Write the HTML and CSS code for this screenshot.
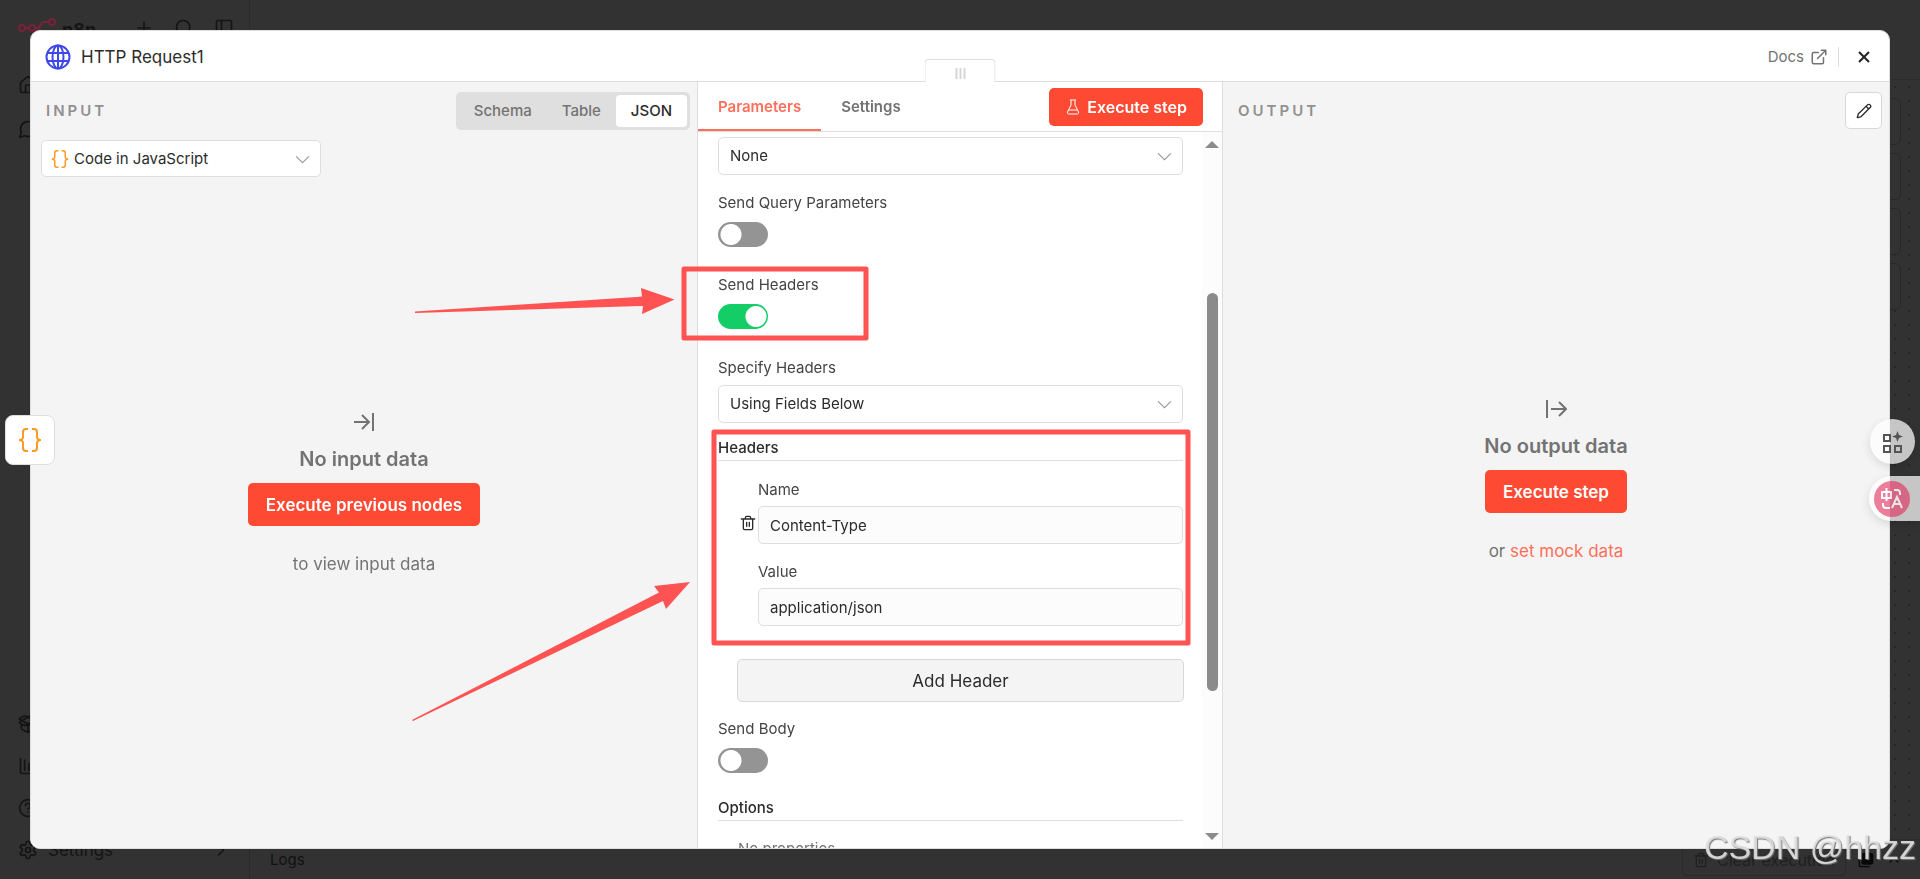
FILE: index.html
```html
<!DOCTYPE html>
<html lang="en">
<head>
<meta charset="utf-8">
<title>HTTP Request1 - n8n</title>
<link rel="stylesheet" href="styles.css">
</head>
<body>
<div class="app">
  <aside class="sidebar">
    <div class="brand">
      <svg class="logo" viewBox="0 0 40 22" width="40" height="22" fill="none" stroke="currentColor" stroke-width="2"><circle cx="4" cy="11" r="3"/><circle cx="14" cy="11" r="3"/><circle cx="34" cy="5" r="3"/><circle cx="32" cy="17" r="3"/><path d="M7 11h4M17 11h2c4 0 3-6 7-6h5M19 11c4 0 4 6 8 6h2"/></svg>
      <span class="brand-name">n8n</span>
      <svg class="icon push" viewBox="0 0 24 24"><path d="M5 12h14M12 5v14"/></svg>
      <svg class="icon" viewBox="0 0 24 24"><circle cx="11" cy="11" r="8"/><path d="m21 21-4.300-4.300"/></svg>
      <svg class="icon" viewBox="0 0 24 24"><rect x="3" y="3" width="18" height="18" rx="2"/><path d="M9 3v18"/></svg>
    </div>
    <nav class="side-nav">
      <svg class="icon" viewBox="0 0 24 24"><path d="M15 21v-8a1 1 0 0 0-1-1h-4a1 1 0 0 0-1 1v8"/><path d="M3 10a2 2 0 0 1 .7-1.500l7-6a2 2 0 0 1 2.600 0l7 6A2 2 0 0 1 21 10v9a2 2 0 0 1-2 2H5a2 2 0 0 1-2-2z"/></svg>
      <svg class="icon" viewBox="0 0 24 24"><path d="M7.900 20A9 9 0 1 0 4 16.100L2 22Z"/></svg>
    </nav>
    <nav class="side-nav bottom">
      <svg class="icon" viewBox="0 0 24 24"><path d="M12 22v-9M15 2.200a1.700 1.700 0 0 1 1.500 0L21.700 5a1 1 0 0 1 0 1.700L9 13.600a1.700 1.700 0 0 1-1.600 0L2.300 11a1 1 0 0 1 0-1.700zM20 13v3.900a2 2 0 0 1-1 1.700L13 21.700a2 2 0 0 1-2 0l-6-3.100a2 2 0 0 1-1-1.700V13M21.700 11a1 1 0 0 0 0-1.700L9 2.400a2 2 0 0 0-1.500 0L2.300 5a1 1 0 0 0 0 1.700l12.700 7a1.700 1.700 0 0 0 1.600 0z"/></svg>
      <svg class="icon" viewBox="0 0 24 24"><path d="M3 3v16a2 2 0 0 0 2 2h16M8 5v12M13 9v8M18 7v10"/></svg>
      <svg class="icon" viewBox="0 0 24 24"><circle cx="12" cy="12" r="10"/><path d="M9 9a3 3 0 0 1 6 1c0 2-3 3-3 3M12 17h.01"/></svg>
      <div class="side-row">
        <svg class="icon" viewBox="0 0 24 24"><circle cx="12" cy="12" r="3"/><path d="M9.700 4a2.300 2.300 0 0 1 4.600 0 2.300 2.300 0 0 0 3.300 2 2.300 2.300 0 0 1 2.300 4 2.300 2.300 0 0 0 0 4 2.300 2.300 0 0 1-2.300 4 2.300 2.300 0 0 0-3.300 2 2.300 2.300 0 0 1-4.600 0 2.300 2.300 0 0 0-3.300-2 2.300 2.300 0 0 1-2.300-4 2.300 2.300 0 0 0 0-4 2.300 2.300 0 0 1 2.300-4 2.300 2.300 0 0 0 3.300-2"/></svg>
        <span>Settings</span>
        <svg class="icon push" viewBox="0 0 24 24"><path d="m9 18 6-6-6-6"/></svg>
      </div>
    </nav>
  </aside>
  <main class="workspace">
    <div class="topbar"></div>
    <div class="canvas">
      <span class="ghost"></span><span class="ghost"></span><span class="ghost"></span><span class="ghost"></span>
    </div>
    <footer class="logs">
      <span>Logs</span>
      <span class="clear push"><svg class="icon" viewBox="0 0 24 24"><path d="M3 6h18M19 6v14a2 2 0 0 1-2 2H7a2 2 0 0 1-2-2V6M8 6V4a2 2 0 0 1 2-2h4a2 2 0 0 1 2 2v2M10 11v6M14 11v6"/></svg>Clear execution</span>
      <svg class="icon dark" viewBox="0 0 24 24"><rect x="6" y="2" width="16" height="16" rx="3" fill="currentColor"/><path d="M2 7v12a3 3 0 0 0 3 3h12"/></svg>
      <svg class="icon dark" viewBox="0 0 24 24"><path d="m6 15 6-6 6 6"/></svg>
    </footer>
  </main>
</div>

<section class="modal" role="dialog" aria-label="HTTP Request1">
  <header class="modal-head">
    <svg class="globe" viewBox="0 0 26 26" width="26" height="26" fill="none" stroke="currentColor" stroke-width="2"><circle cx="13" cy="13" r="11.500"/><ellipse cx="13" cy="13" rx="5.500" ry="11.500"/><path d="M13 1.500v23M2.500 9h21M2.500 17h21"/></svg>
    <h1>HTTP Request1</h1>
    <a class="docs" href="#">Docs
      <svg class="icon" viewBox="0 0 24 24"><path d="M15 3h6v6M10 14 21 3M18 13v6a2 2 0 0 1-2 2H5a2 2 0 0 1-2-2V8a2 2 0 0 1 2-2h6"/></svg>
    </a>
    <button class="close" aria-label="Close"><svg viewBox="0 0 12 12" width="12" height="12" fill="none" stroke="currentColor" stroke-width="2"><path d="m1 1 10 10M11 1 1 11"/></svg></button>
    <span class="grip"><i></i><i></i><i></i></span>
  </header>
  <div class="panels">
    <section class="side input">
      <div class="side-head">
        <h2>INPUT</h2>
        <div class="segmented"><button>Schema</button><button>Table</button><button class="on">JSON</button></div>
      </div>
      <div class="picker">
        <svg class="braces" viewBox="0 0 24 24"><path d="M10 1H8a3 3 0 0 0-3 3v5c0 2-2 3-4 3 2 0 4 1 4 3v5a3 3 0 0 0 3 3h2M14 1h2a3 3 0 0 1 3 3v5c0 2 2 3 4 3-2 0-4 1-4 3v5a3 3 0 0 1-3 3h-2"/></svg>
        <select aria-label="Input node"><option>Code in JavaScript</option></select>
        <svg class="chev" viewBox="0 0 14 8"><path d="m1 1 6 6 6-6"/></svg>
      </div>
      <div class="empty">
        <svg class="arrow" viewBox="0 0 22 18"><path d="M1 9h15M9 2l7 7-7 7M20 0v18"/></svg>
        <h3>No input data</h3>
        <button class="primary large">Execute previous nodes</button>
        <p>to view input data</p>
      </div>
    </section>

    <section class="center">
      <div class="tabs">
        <button class="tab on">Parameters</button>
        <button class="tab">Settings</button>
        <button class="primary run push"><svg class="flask" viewBox="0 0 14 16"><path d="M4 1h6M5 1v5L1.500 13a1.500 1.500 0 0 0 1 2h9a1.500 1.500 0 0 0 1-2L9 6V1M3 11h8"/></svg>Execute step</button>
      </div>
      <div class="scroll">
        <form class="fields">
          <div class="box"><select aria-label="Authentication"><option>None</option></select><svg class="chev" viewBox="0 0 14 8"><path d="m1 1 6 6 6-6"/></svg></div>
          <div class="row"><label for="q">Send Query Parameters</label><input class="switch" type="checkbox" id="q"></div>
          <div class="row"><label for="h">Send Headers</label><input class="switch" type="checkbox" id="h" checked></div>
          <div class="row specify"><label for="s">Specify Headers</label>
            <div class="box"><select id="s"><option>Using Fields Below</option></select><svg class="chev" viewBox="0 0 14 8"><path d="m1 1 6 6 6-6"/></svg></div></div>
          <fieldset>
            <div class="legend">Headers</div>
            <div class="pair">
              <button type="button" class="trash" aria-label="Delete header"><svg class="icon" viewBox="0 0 24 24"><path d="M2 6h20M19 6v14a2 2 0 0 1-2 2H7a2 2 0 0 1-2-2V6M8 6V4a2 2 0 0 1 2-2h4a2 2 0 0 1 2 2v2M10 11v6M14 11v6"/></svg></button>
              <div class="inputs">
                <label for="n">Name</label><input class="box text" id="n" value="Content-Type">
                <label for="v">Value</label><input class="box text" id="v" value="application/json">
              </div>
            </div>
            <button type="button" class="add">Add Header</button>
          </fieldset>
          <div class="row body"><label for="b">Send Body</label><input class="switch" type="checkbox" id="b"></div>
          <div class="legend options">Options</div>
          <p class="none">No properties</p>
        </form>
        <div class="bar"><i class="up"></i><i class="thumb"></i><i class="down"></i></div>
      </div>
    </section>

    <section class="side output">
      <div class="side-head">
        <h2>OUTPUT</h2>
        <button class="edit" aria-label="Edit output"><svg class="icon" viewBox="0 0 24 24"><path d="M21.200 6.800a1 1 0 0 0-4-4L3.800 16.200a2 2 0 0 0-.5.800L2 21.400a.5.500 0 0 0 .6.600L7 20.700a2 2 0 0 0 .8-.5zM15 5l4 4"/></svg></button>
      </div>
      <div class="empty">
        <svg class="arrow" viewBox="0 0 22 18"><path d="M2 0v18M6 9h15M14 2l7 7-7 7"/></svg>
        <h3>No output data</h3>
        <button class="primary large">Execute step</button>
        <p>or <a href="#">set mock data</a></p>
      </div>
    </section>
  </div>
</section>

<button class="node-badge" aria-label="Code in JavaScript"><svg class="braces" viewBox="0 0 24 24"><path d="M10 1H8a3 3 0 0 0-3 3v5c0 2-2 3-4 3 2 0 4 1 4 3v5a3 3 0 0 0 3 3h2M14 1h2a3 3 0 0 1 3 3v5c0 2 2 3 4 3-2 0-4 1-4 3v5a3 3 0 0 1-3 3h-2"/></svg></button>
<button class="float apps" aria-label="Apps"><svg viewBox="1 0 22 22" width="22" height="22" fill="none" stroke="currentColor" stroke-width="2"><path d="M3 4h6v6H3zM3 15h6v6H3zM14 15h6v6h-6z"/><path d="M16.500 0 18 4l4 1.500L18 7l-1.500 4L15 7l-4-1.500L15 4z" fill="currentColor" stroke="none"/></svg></button>
<button class="float translate" aria-label="Translate"><svg viewBox="0 0 36 36" width="36" height="36" fill="none" stroke="#fff" stroke-width="2"><circle cx="18" cy="18" r="18" fill="#e02a5c" stroke="none"/><path d="M8 11h9v6H8zM12.500 7v13M20 9h3a3 3 0 0 1 3 3v2M9 22v2a3 3 0 0 0 3 3h4M18 27l5-11 5 11M20 23h6"/></svg></button>

<svg class="marks" width="1920" height="879" viewBox="0 0 1920 879" aria-hidden="true">
  <g fill="none" stroke="#ff5252" stroke-width="5" stroke-linejoin="round"><rect x="684" y="269" width="182" height="69"/><rect x="714" y="432" width="474" height="211"/></g>
  <g fill="#ff5252"><path d="M415 311.500 642 296.500 641 288 674.500 299.500 642 314 643 306 415 313z"/><path d="M412 720 659 592.500 654 586 690 582 666 609 663 601 413 721z"/></g>
</svg>
<div class="watermark">CSDN @hhzz</div>
</body>
</html>
```
FILE: styles.css
```css
* { box-sizing: border-box; }
body { margin: 0; height: 100vh; overflow: hidden; background: #323232; color: #2b2b2b; font: 15px/20px Inter, sans-serif; }
h1, h2, h3, p, fieldset { margin: 0; padding: 0; border: 0; font-weight: 400; min-width: 0; }
button, input, select { font: inherit; color: inherit; margin: 0; }
button { border: 0; background: none; padding: 0; cursor: pointer; }
a { text-decoration: none; color: inherit; }
.push { margin-left: auto; }
.icon { width: 20px; height: 20px; flex: none; fill: none; stroke: currentColor; stroke-width: 2; stroke-linecap: round; stroke-linejoin: round; }

.app { display: flex; height: 100vh; color: #141414; }
.sidebar { width: 250px; border-right: 1px solid #2a2a2a; display: flex; flex-direction: column; }
.brand { display: flex; align-items: center; gap: 20px; height: 22px; margin-top: 17px; padding: 0 15px 0 18px; }
.logo { color: #7a2038; }
.brand-name { padding-top: 3px; font-size: 18px; font-weight: 700; margin-left: -16px; }
.side-nav { display: flex; flex-direction: column; gap: 24px; padding: 36px 18px 0; }
.side-nav.bottom { margin-top: auto; gap: 22px; padding-bottom: 19px; }
.side-row { display: flex; align-items: center; gap: 10px; font-size: 17px; }
.workspace { flex: 1; display: flex; flex-direction: column; }
.topbar { height: 80px; border-bottom: 1px solid #2b2b2b; }
.canvas { flex: 1; display: flex; flex-direction: column; align-items: flex-end; gap: 8px; padding: 18px 19px; background: radial-gradient(circle, #262626 1px, transparent 1px) 0 0 / 14px 14px; }
.ghost { width: 48px; height: 47px; background: #323232; border: 1px solid #282828; border-radius: 6px; }
.logs { height: 40px; display: flex; align-items: center; gap: 12px; padding: 0 18px 0 20px; border-top: 1px solid #2b2b2b; color: #111; }
.clear { display: flex; align-items: center; gap: 8px; height: 32px; padding: 0 10px; border: 1px solid #2a2a2a; border-radius: 5px; font-size: 16px; color: #202020; }
.logs .icon { width: 16px; height: 16px; }
.logs .dark { color: #080808; }

.modal { position: fixed; inset: 30px; display: flex; flex-direction: column; background: #fff; border: 1px solid #dedede; border-radius: 10px; overflow: hidden; }
.modal-head { position: relative; height: 51px; flex: none; display: flex; align-items: center; padding: 2px 19px 0 14px; border-bottom: 1px solid #dedede; }
.globe { color: #3f46ea; margin-right: 10px; }
h1 { font-size: 17px; line-height: 24px; }
.docs { display: flex; align-items: center; gap: 6px; margin-left: auto; padding-right: 10px; color: #737373; }
.docs .icon { width: 18px; height: 18px; }
.close { display: flex; align-items: center; height: 20px; padding-left: 19px; border-left: 1px solid #dedede; color: #222; }
.grip { position: absolute; left: 50%; bottom: -1px; transform: translateX(-50%); width: 71px; height: 23px; padding-top: 5px; display: flex; justify-content: center; align-items: center; gap: 2px; background: #fff; border: 1px solid #dedede; border-bottom: 0; border-radius: 4px 4px 0 0; }
.grip i { width: 2px; height: 11px; background: #d5d5d5; }
.panels { flex: 1; min-height: 0; display: grid; grid-template-columns: minmax(0, 1fr) 526px minmax(0, 1fr); }
.side { min-width: 0; display: flex; flex-direction: column; background: #f4f4f4; }
.side-head { display: flex; justify-content: space-between; align-items: center; padding: 10px 7px 0 15px; }
h2 { font-size: 15px; font-weight: 600; letter-spacing: 3px; color: #909090; }
.segmented { display: flex; padding: 3px; background: #dfdfdf; border-radius: 5px; }
.segmented button { height: 32px; padding: 0 15px; border-radius: 4px; font-weight: 500; color: #737373; }
.segmented .on { background: #fff; color: #2b2b2b; }
.picker { position: relative; display: flex; align-items: center; width: 280px; height: 37px; margin: 10px 0 0 10px; padding-left: 9px; background: #fff; border: 1px solid #dedede; border-radius: 5px; }
.braces { width: 18px; height: 18px; flex: none; fill: none; stroke: #ff9922; stroke-width: 2; }
select { appearance: none; width: 100%; height: 100%; border: 0; background: none; padding: 0 36px 0 5px; outline: 0; }
.chev { position: absolute; right: 10px; top: 50%; width: 15px; height: 9px; margin-top: -4px; fill: none; stroke: #999; pointer-events: none; }
.empty { flex: 1; display: flex; flex-direction: column; align-items: center; color: #737373; font-size: 17px; line-height: 24px; }
.input .empty { padding-top: 236px; }
.output .empty { padding-top: 271px; }
.arrow { width: 22px; height: 18px; fill: none; stroke: currentColor; stroke-width: 2; }
h3 { margin: 16px 0 12px; font-size: 20px; line-height: 24px; font-weight: 600; }
.primary { background: #ff4a33; color: #fff; border-radius: 5px; font-size: 16px; font-weight: 600; }
.large { height: 43px; padding: 0 18px; font-size: 17px; line-height: 24px; }
.empty p { margin-top: 26px; }
.empty a { color: #ff6f5c; }
.edit { display: grid; place-items: center; width: 37px; height: 37px; background: #fff; border: 1px solid #d8d8d8; border-radius: 5px; }
.edit .icon { width: 16px; height: 16px; }

.center { min-width: 0; min-height: 0; display: flex; flex-direction: column; border: solid #dedede; border-width: 0 1px; background: #fff; }
.tabs { display: flex; height: 50px; flex: none; padding-right: 19px; border-bottom: 1px solid #dedede; align-items: center; }
.tab { align-self: stretch; padding: 2px 20px 0; font-weight: 600; color: #737373; border-bottom: 2px solid transparent; }
.tab.on { color: #ff6f5c; border-color: #ff6f5c; }
.run { display: flex; align-items: center; gap: 7px; height: 38px; padding: 0 16px 0 17px; }
.flask { width: 14px; height: 16px; fill: none; stroke: currentColor; }
.scroll { flex: 1; min-height: 0; display: flex; overflow: hidden; }
.fields { flex: 1; min-width: 0; padding: 5px 19px 0 20px; }
.box { position: relative; height: 38px; width: 100%; border: 1px solid #dedede; border-radius: 5px; }
.box select { padding-left: 11px; }
.row { margin-top: 18px; display: flex; flex-direction: column; gap: 9px; color: #444; }
.row .box { color: #2b2b2b; }
.row + .row { margin-top: 28px; }
.row + .specify { margin-top: 29px; gap: 7px; }
.switch { appearance: none; width: 50px; height: 25px; border-radius: 13px; background: radial-gradient(circle at 13px 50%, #fff 10px, #949494 11px); }
.switch:checked { background: radial-gradient(circle at 38px 50%, #fff 10px, #13ce66 11px); }
.legend { font-weight: 500; margin-top: 15px; padding-bottom: 2px; border-bottom: 1px solid #dedede; }
.pair { display: flex; align-items: flex-start; padding: 19px 0 0 22px; }
.trash { display: flex; margin: 35px 2px 0 0; }
.trash .icon { width: 16px; height: 16px; }
.inputs { flex: 1; display: flex; flex-direction: column; gap: 6px; color: #444; }
.text { margin-bottom: 12px; padding: 0 11px; background: #fcfcfc; color: #2b2b2b; }
.add { display: block; width: calc(100% - 18px); height: 43px; margin: 21px 0 0 19px; background: #f4f4f4; border: 1px solid #d8d8d8; border-radius: 5px; font-size: 17px; }
.body { margin-top: 17px; }
.options { margin-top: 25px; }
.none { margin: 18px 20px 0; color: #737373; }
.bar { width: 20px; flex: none; display: flex; flex-direction: column; align-items: center; padding: 9px 0 8px; background: #fcfcfc; }
.up, .down { border: 7px solid transparent; border-top: 0; border-bottom: 7px solid #8b8b8b; }
.down { margin-top: auto; border-top: 7px solid #8b8b8b; border-bottom: 0; }
.thumb { width: 11px; height: 398px; margin-top: 145px; border-radius: 6px; background: #8b8b8b; }

.node-badge { position: fixed; left: 5px; top: 415px; display: grid; place-items: center; width: 50px; height: 50px; background: #fff; border: 1px solid #dedede; border-radius: 8px; }
.node-badge .braces { width: 24px; height: 24px; }
.float { position: fixed; height: 45px; display: flex; align-items: center; background: rgba(255, 255, 255, .72); box-shadow: 0 3px 10px rgba(0, 0, 0, .12); color: #555; }
.apps { right: 5px; top: 419px; width: 45px; justify-content: center; border-radius: 50%; }
.translate { right: 0; top: 476px; width: 51px; padding-left: 5px; border-radius: 23px 0 0 23px; }
.translate svg { opacity: .6; }
.marks { position: fixed; left: 0; top: 0; pointer-events: none; }
.watermark { position: fixed; right: 4px; bottom: 12px; font: 34px/40px "Liberation Sans", sans-serif; color: rgba(225, 225, 225, .9); text-shadow: 1px 1px 1px #777; pointer-events: none; }
```
